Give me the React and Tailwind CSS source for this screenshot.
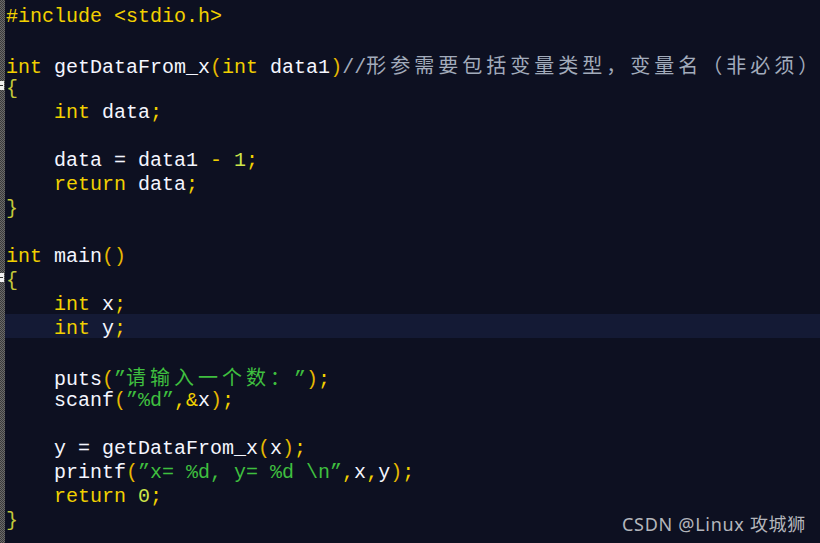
import React from "react";

const K = ({ children }) => <span className="text-[#f2d000]">{children}</span>;
const W = ({ children }) => <span className="text-[#f4f6ff]">{children}</span>;
const P = ({ children }) => <span className="text-[#e6b800]">{children}</span>;
const B = ({ children }) => <span className="text-[#c4c83a]">{children}</span>;
const N = ({ children }) => <span className="text-[#cde64a]">{children}</span>;
const S = ({ children }) => <span className="text-[#3fbf3f]">{children}</span>;
const C = ({ children }) => <span className="text-[#a2abbb]">{children}</span>;
const CJK = ({ children, cls }) => (
  <span
    className={`tracking-[4px] [text-spacing-trim:space-all] font-['Noto_Sans_CJK_SC',sans-serif] ${cls}`}
  >
    {children}
  </span>
);

const lines = [
  <><K>#include &lt;stdio.h&gt;</K></>,
  null,
  <>
    <K>int</K> <W>getDataFrom_x</W><P>(</P><K>int</K> <W>data1</W><P>)</P>
    <C>//</C>
    <CJK cls="text-[#a2abbb]">形参需要包括变量类型，变量名（非必须）</CJK>
  </>,
  <><B>{"{"}</B></>,
  <>    <K>int</K> <W>data</W><K>;</K></>,
  null,
  <>    <W>data = data1</W> <K>-</K> <N>1</N><K>;</K></>,
  <>    <K>return</K> <W>data</W><K>;</K></>,
  <><B>{"}"}</B></>,
  null,
  <><K>int</K> <W>main</W><P>()</P></>,
  <><B>{"{"}</B></>,
  <>    <K>int</K> <W>x</W><K>;</K></>,
  <>    <K>int</K> <W>y</W><K>;</K></>,
  null,
  <>    <W>puts</W><P>(</P><S>”</S><CJK cls="text-[#3fbf3f]">请输入一个数：</CJK><S>”</S><P>)</P><K>;</K></>,
  <>    <W>scanf</W><P>(</P><S>”%d”</S><K>,&amp;</K><W>x</W><P>)</P><K>;</K></>,
  null,
  <>    <W>y = getDataFrom_x</W><P>(</P><W>x</W><P>)</P><K>;</K></>,
  <>    <W>printf</W><P>(</P><S>”x= %d, y= %d \n”</S><K>,</K><W>x</W><K>,</K><W>y</W><P>)</P><K>;</K></>,
  <>    <K>return</K> <N>0</N><K>;</K></>,
  <><B>{"}"}</B></>,
];

export default function App() {
  return (
    <div className="relative w-[820px] h-[543px] overflow-hidden bg-[#0d1021] flex">
      <div className="w-[5px] h-full shrink-0 bg-[repeating-conic-gradient(#6a6a6a_0_25%,#3a3a3a_0_50%)] bg-[length:2px_2px]" />
      <div className="flex-1 pt-[2px] font-['Liberation_Mono',monospace] text-[20px] leading-[24px] whitespace-pre [text-spacing-trim:space-all]">
        {lines.map((l, i) => (
          <div
            key={i}
            className={`relative h-[24px] pl-[1px] ${i === 13 ? "bg-[#141a35]" : ""}`}
          >
            {(i === 3 || i === 11) && (
              <div className="absolute left-[-5px] top-[7px] w-[4px] h-[9px] bg-[#f0f0f0] flex items-center">
                <div className="w-[3px] h-[1px] bg-[#333]" />
              </div>
            )}
            <div className="pt-[3px] leading-[24px]">{l}</div>
          </div>
        ))}
      </div>
      <div className="absolute right-[14px] bottom-[9px] text-[18px] tracking-[0.7px] leading-[20px] text-[#b4b6bc] font-['Noto_Sans','Noto_Sans_CJK_SC',sans-serif]">
        CSDN @Linux 攻城狮
      </div>
    </div>
  );
}
